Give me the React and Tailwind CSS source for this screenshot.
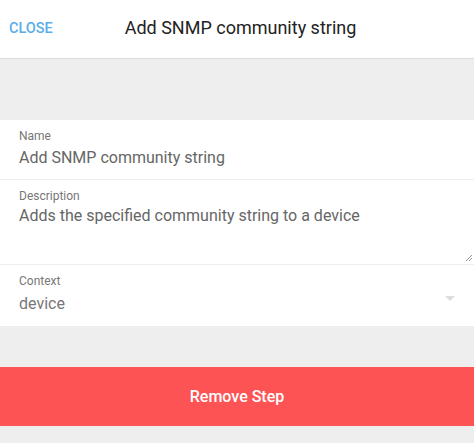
import React from 'react';

const font = { fontFamily: 'Roboto, "Liberation Sans", sans-serif' };

const App = () => {
    return (
        <div className="w-[474px] h-[443px] bg-[#eeeeee] overflow-hidden" style={font}>

            {/* Header */}
            <div className="h-[59px] bg-white border-b border-[#dddddd] flex items-center relative">
                <button className="absolute left-[9px] top-[19px] text-[14.5px] font-medium text-[#5aaee8] leading-[20px]">
                    CLOSE
                </button>
                <h1 className="w-full text-center text-[18px] text-[#222222] leading-[24px] pl-[7px] pb-[2px]">
                    Add SNMP community string
                </h1>
            </div>

            <div className="h-[61px]" />

            {/* Name */}
            <div className="bg-white h-[60px] px-[19px] pt-[9px] border-b border-[#eeeeee]">
                <div className="text-[12px] text-[#777777] leading-[15px]">Name</div>
                <div className="text-[16px] text-[#666666] leading-[20px] mt-[4px]">Add SNMP community string</div>
            </div>

            {/* Description */}
            <div className="bg-white h-[85px] px-[19px] pt-[9px] border-b border-[#eeeeee] relative">
                <div className="text-[12px] text-[#777777] leading-[15px]">Description</div>
                <div className="text-[16px] text-[#666666] leading-[20px] mt-[2px]">Adds the specified community string to a device</div>
                <svg className="absolute right-[1px] bottom-[2px]" width="8" height="8" viewBox="0 0 8 8">
                    <path d="M7 1 L1 7 M7 4 L4 7" stroke="#999999" strokeWidth="1" />
                </svg>
            </div>

            {/* Context */}
            <div className="bg-white h-[61px] px-[19px] pt-[9px] relative">
                <div className="text-[12px] text-[#777777] leading-[15px]">Context</div>
                <div className="text-[16px] text-[#777777] leading-[20px] mt-[5px]">device</div>
                <svg className="absolute right-[19px] top-[31px]" width="10" height="6" viewBox="0 0 10 6">
                    <path d="M0 0 L10 0 L5 5 Z" fill="#dddddd" />
                </svg>
            </div>

            <div className="h-[41px]" />

            {/* Remove */}
            <button className="w-full h-[59px] bg-[#fd5355] text-white text-[16px] font-medium flex items-center justify-center">
                Remove Step
            </button>

        </div>
    );
};

export default App;
